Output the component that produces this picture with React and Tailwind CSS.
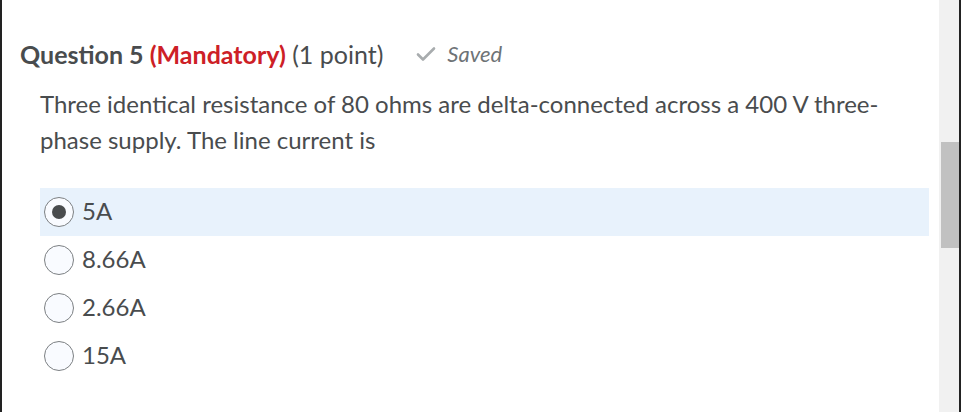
import React, { useState } from "react";

const options = ["5A", "8.66A", "2.66A", "15A"];

function Radio({ checked }) {
  return (
    <span className="flex h-[30px] w-[30px] shrink-0 items-center justify-center rounded-full border border-[#7c8083] bg-[#f9fbff]">
      {checked && <span className="h-[14px] w-[14px] rounded-full bg-[#494c4e]" />}
    </span>
  );
}

export default function App() {
  const [selected, setSelected] = useState(0);

  return (
    <div
      className="flex h-[412px] w-[961px] overflow-hidden bg-white text-[#494c4e]"
      style={{ fontFamily: "Lato, 'Noto Sans', sans-serif" }}
    >
      <div className="w-[2px] shrink-0 bg-[#222222]" />
      <div className="flex-1 pl-[18px] pt-[36px]">
        <div className="flex items-baseline text-[25px] leading-[36px]">
          <span className="font-bold">Question 5</span>
          <span className="font-bold text-[#cd2026]">&nbsp;(Mandatory)</span>
          <span>&nbsp;(1 point)</span>
          <span className="ml-[33px] flex items-center self-center text-[22px] italic text-[#6e7376]">
            <svg width="20" height="16" viewBox="0 0 20 16" className="mr-[11px]">
              <path d="M2 8.5l5 5L18 2.5" fill="none" stroke="#a8acae" strokeWidth="2.6" strokeLinecap="round" strokeLinejoin="round" />
            </svg>
            Saved
          </span>
        </div>
        <p className="mt-[14px] pl-[20px] pr-[20px] text-[24px] leading-[36px]">
          Three identical resistance of 80 ohms are delta-connected across a 400 V three-phase supply. The line current is
        </p>
        <div className="mt-[30px] ml-[20px] mr-[10px] flex flex-col">
          {options.map((opt, i) => (
            <label
              key={opt}
              onClick={() => setSelected(i)}
              className={`flex h-[48px] cursor-pointer items-center gap-[8px] pl-[4px] text-[24px] ${
                selected === i ? "bg-[#e8f2fc]" : ""
              }`}
            >
              <Radio checked={selected === i} />
              <span className="-mt-[3px]">{opt}</span>
            </label>
          ))}
        </div>
      </div>
      <div className="relative w-[20px] shrink-0 bg-[#f1f1f1]">
        <div className="absolute left-[2px] right-0 top-[142px] h-[106px] bg-[#c1c1c1]" />
      </div>
      <div className="w-[2px] shrink-0 bg-[#222222]" />
    </div>
  );
}
